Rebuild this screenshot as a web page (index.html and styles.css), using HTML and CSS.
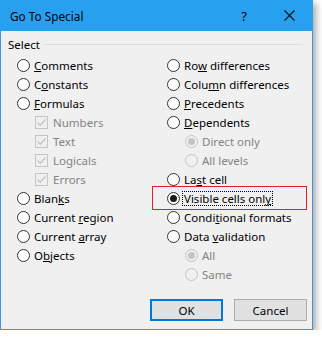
FILE: index.html
```html
<!DOCTYPE html>
<html lang="en">
<head>
    <meta charset="UTF-8">
    <title>Go To Special</title>
    <link rel="stylesheet" href="styles.css">
</head>
<body>
<div class="window">
    <div class="title-bar">
        <span class="title">Go To Special</span>
        <span class="help">?</span>
        <span class="close">
            <svg width="11" height="11" viewBox="0 0 11 11"><path d="M0.5 0.5 L10.5 10.5 M10.5 0.5 L0.5 10.5" stroke="#111" stroke-width="1.1" fill="none"/></svg>
        </span>
    </div>
    <div class="content">
        <div class="group-label"><span>Select</span><div class="group-line"></div></div>
        <div class="options">
            <div class="column">
                <div class="opt"><span class="radio"></span><span><u>C</u>omments</span></div>
                <div class="opt"><span class="radio"></span><span>C<u>o</u>nstants</span></div>
                <div class="opt"><span class="radio"></span><span><u>F</u>ormulas</span></div>
                <div class="opt sub disabled"><span class="check"><svg width="11" height="11" viewBox="0 0 11 11"><path d="M1.5 5.5 L4.2 8.2 L9.5 2.5" stroke="#c4c4c4" stroke-width="1.3" fill="none"/></svg></span><span>Numbers</span></div>
                <div class="opt sub disabled"><span class="check"><svg width="11" height="11" viewBox="0 0 11 11"><path d="M1.5 5.5 L4.2 8.2 L9.5 2.5" stroke="#c4c4c4" stroke-width="1.3" fill="none"/></svg></span><span>Text</span></div>
                <div class="opt sub disabled"><span class="check"><svg width="11" height="11" viewBox="0 0 11 11"><path d="M1.5 5.5 L4.2 8.2 L9.5 2.5" stroke="#c4c4c4" stroke-width="1.3" fill="none"/></svg></span><span>Logicals</span></div>
                <div class="opt sub disabled"><span class="check"><svg width="11" height="11" viewBox="0 0 11 11"><path d="M1.5 5.5 L4.2 8.2 L9.5 2.5" stroke="#c4c4c4" stroke-width="1.3" fill="none"/></svg></span><span>Errors</span></div>
                <div class="opt"><span class="radio"></span><span>Blan<u>k</u>s</span></div>
                <div class="opt"><span class="radio"></span><span>Current <u>r</u>egion</span></div>
                <div class="opt"><span class="radio"></span><span>Current <u>a</u>rray</span></div>
                <div class="opt"><span class="radio"></span><span>O<u>b</u>jects</span></div>
            </div>
            <div class="column right">
                <div class="opt"><span class="radio"></span><span>Ro<u>w</u> differences</span></div>
                <div class="opt"><span class="radio"></span><span>Colu<u>m</u>n differences</span></div>
                <div class="opt"><span class="radio"></span><span><u>P</u>recedents</span></div>
                <div class="opt"><span class="radio"></span><span><u>D</u>ependents</span></div>
                <div class="opt sub disabled"><span class="radio checked"></span><span>Direct only</span></div>
                <div class="opt sub disabled"><span class="radio"></span><span>All levels</span></div>
                <div class="opt"><span class="radio"></span><span>La<u>s</u>t cell</span></div>
                <div class="opt marked"><span class="radio checked"></span><span class="focus">Visible cells onl<u>y</u></span></div>
                <div class="opt"><span class="radio"></span><span>Condi<u>t</u>ional formats</span></div>
                <div class="opt"><span class="radio"></span><span>Data <u>v</u>alidation</span></div>
                <div class="opt sub disabled"><span class="radio checked"></span><span>All</span></div>
                <div class="opt sub disabled"><span class="radio"></span><span>Same</span></div>
            </div>
        </div>
        <div class="buttons">
            <button class="btn default">OK</button>
            <button class="btn">Cancel</button>
        </div>
    </div>
</div>
</body>
</html>
```

FILE: styles.css
```css
body {
    margin: 0;
    background-color: #fff;
    font-family: 'Noto Sans', 'Open Sans', sans-serif;
    font-size: 11.5px;
    color: #000;
}

.window {
    box-sizing: border-box;
    width: 313px;
    height: 330px;
    border: 1px solid #3d95dc;
    border-top: none;
    background-color: #f0f0f0;
    box-shadow: 3px 3px 7px rgba(0, 0, 0, 0.35);
    display: flex;
    flex-direction: column;
}

.title-bar {
    height: 31px;
    margin: 0 -1px;
    background-color: #27a1ef;
    display: flex;
    align-items: center;
    padding-left: 10px;
}

.title {
    flex: 1;
    font-size: 11.8px;
}

.help {
    width: 46px;
    text-align: center;
    font-size: 13px;
    margin-right: -1px;
}

.close {
    width: 46px;
    display: flex;
    justify-content: center;
    padding-right: 1px;
}

.content {
    flex: 1;
    display: flex;
    flex-direction: column;
    padding: 0 5px 0 7px;
}

.group-label {
    display: flex;
    align-items: center;
    height: 15px;
    margin-top: 6px;
    line-height: 15px;
}

.group-line {
    flex: 1;
    height: 1px;
    background-color: #dcdcdc;
    margin: 0 4px 0 4px;
}

.options {
    display: flex;
    margin-top: 4px;
    padding-left: 9px;
}

.column {
    width: 150px;
    flex-shrink: 0;
    display: flex;
    flex-direction: column;
}

.column.right {
    width: auto;
    flex: 1;
}

.opt {
    height: 19px;
    display: flex;
    align-items: center;
    gap: 4px;
    white-space: nowrap;
    position: relative;
}

.opt.sub {
    padding-left: 18px;
}

.opt.disabled {
    color: #838383;
}

.radio {
    box-sizing: border-box;
    width: 13px;
    height: 13px;
    border: 1px solid #333;
    border-radius: 50%;
    background-color: #fff;
    display: flex;
    align-items: center;
    justify-content: center;
    flex-shrink: 0;
}

.radio.checked::after {
    content: "";
    width: 7px;
    height: 7px;
    border-radius: 50%;
    background-color: #1a1a1a;
}

.disabled .radio {
    border-color: #c4c4c4;
    background-color: #f0f0f0;
}

.disabled .radio.checked::after {
    background-color: #c4c4c4;
}

.check {
    box-sizing: border-box;
    width: 13px;
    height: 13px;
    border: 1px solid #c4c4c4;
    display: flex;
    align-items: center;
    justify-content: center;
    margin-right: 1px;
}

.marked::before {
    content: "";
    position: absolute;
    left: -15px;
    right: 0;
    top: -3px;
    bottom: -2px;
    border: 1.5px solid #e0202a;
}

.focus {
    outline: 1px dotted #000;
    line-height: 13px;
    padding: 0 1px;
    margin-left: -1px;
}

.buttons {
    display: flex;
    justify-content: flex-end;
    gap: 11px;
    margin-top: 15px;
}

.btn {
    box-sizing: border-box;
    width: 73px;
    height: 22px;
    font-family: inherit;
    font-size: 11.5px;
    background-color: #e1e1e1;
    border: 1px solid #adadad;
    padding: 0;
}

.btn.default {
    border: 2px solid #0078d7;
}
```
